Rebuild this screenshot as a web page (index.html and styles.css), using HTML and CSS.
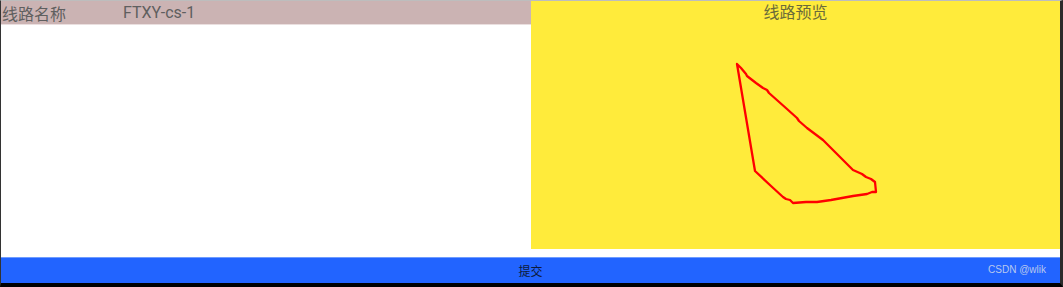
FILE: index.html
```html
<!DOCTYPE html>
<html lang="zh">
<head>
<meta charset="utf-8">
<title>线路预览</title>
<link rel="stylesheet" href="styles.css">
</head>
<body>
<div class="frame">
  <div class="main">
    <div class="left">
      <div class="name-row">
        <span class="label">线路名称</span>
        <span class="value">FTXY-cs-1</span>
      </div>
    </div>
    <div class="preview">
      <div class="preview-title">线路预览</div>
      <svg class="route" viewBox="0 0 529 224" width="529" height="224">
        <polygon points="206,39 210,43 215,49 216,51 225,58 232,63 236,65 238,68 256,84 266,93 268,96 276,103 284,109 292,115 305,128 319,142 322,145 331,149 335,152 340,154 344,157 345,167 341,167 336,169 322,171 300,175 286,177 275,177 262,178 259,175 255,174 252,172 240,161 224,146" fill="none" stroke="#ff0000" stroke-width="2.3" stroke-linejoin="round"/>
      </svg>
    </div>
  </div>
  <div class="spacer"></div>
  <div class="submit">
    <span class="submit-text">提交</span>
    <span class="watermark">CSDN @wlik</span>
  </div>
</div>
</body>
</html>
```

FILE: styles.css
```css
html, body {
  margin: 0;
  padding: 0;
  background: #ffffff;
}

.frame {
  box-sizing: border-box;
  width: 1063px;
  height: 287px;
  border-top: 1px solid #bdbdbd;
  border-left: 1px solid #333333;
  border-right: 3px solid #2b2b2b;
  border-bottom: 4px solid #000000;
  display: flex;
  flex-direction: column;
  font-family: Roboto, "Noto Sans CJK SC", sans-serif;
}

.main {
  display: flex;
  height: 248px;
}

.left {
  width: 530px;
  background: #ffffff;
}

.name-row {
  height: 23px;
  background: #cbb3b3;
  border-bottom: 1px solid #eadfdf;
  display: flex;
  align-items: center;
  padding-left: 1px;
  font-size: 16px;
  color: #5f5f5f;
}

.label {
  width: 121px;
}

.value {
  font-size: 16px;
}

.preview {
  flex: 1;
  background: #ffeb3b;
  display: flex;
  flex-direction: column;
}

.preview-title {
  height: 24px;
  line-height: 24px;
  text-align: center;
  font-size: 16px;
  color: #6b6b3a;
}

.route {
  display: block;
}

.spacer {
  height: 8px;
}

.submit {
  flex: 1;
  background: #2264ff;
  border-top: 1px solid #6f9cff;
  position: relative;
  display: flex;
  align-items: center;
  justify-content: center;
}

.submit-text {
  font-size: 12px;
  color: #0e1a3a;
}

.watermark {
  position: absolute;
  right: 14px;
  top: 6px;
  font-family: "Liberation Sans", sans-serif;
  font-size: 10px;
  color: #b8c8ee;
}
```
